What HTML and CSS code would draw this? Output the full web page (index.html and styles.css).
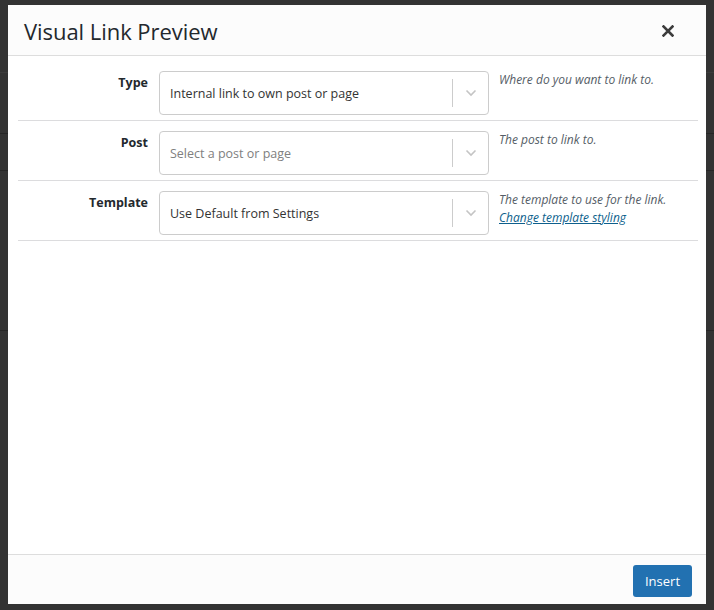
FILE: index.html
```html
<!DOCTYPE html>
<html lang="en">
<head>
<meta charset="utf-8">
<title>Visual Link Preview</title>
<link rel="stylesheet" href="styles.css">
</head>
<body>
<div class="modal">
  <header class="modal-header">
    <h1 class="modal-title">Visual Link Preview</h1>
    <button class="close" aria-label="Close">
      <svg width="12" height="12" viewBox="0 0 12 12"><path d="M1.5 1.5 L10.5 10.5 M10.5 1.5 L1.5 10.5" stroke="#3c3c3c" stroke-width="2.6" stroke-linecap="square"/></svg>
    </button>
  </header>
  <main class="modal-body">
    <div class="field-row">
      <div class="label">Type</div>
      <div class="select">
        <span class="value">Internal link to own post or page</span>
        <span class="indicator"><svg width="12" height="8" viewBox="0 0 12 8"><path d="M1.5 1.5 L6 6 L10.5 1.5" fill="none" stroke="#c4c4c4" stroke-width="1.6"/></svg></span>
      </div>
      <div class="desc">Where do you want to link to.</div>
    </div>
    <div class="field-row">
      <div class="label">Post</div>
      <div class="select">
        <span class="value placeholder">Select a post or page</span>
        <span class="indicator"><svg width="12" height="8" viewBox="0 0 12 8"><path d="M1.5 1.5 L6 6 L10.5 1.5" fill="none" stroke="#c4c4c4" stroke-width="1.6"/></svg></span>
      </div>
      <div class="desc">The post to link to.</div>
    </div>
    <div class="field-row">
      <div class="label">Template</div>
      <div class="select">
        <span class="value">Use Default from Settings</span>
        <span class="indicator"><svg width="12" height="8" viewBox="0 0 12 8"><path d="M1.5 1.5 L6 6 L10.5 1.5" fill="none" stroke="#c4c4c4" stroke-width="1.6"/></svg></span>
      </div>
      <div class="desc">The template to use for the link.<br><a href="#">Change template styling</a></div>
    </div>
  </main>
  <footer class="modal-footer">
    <button class="btn-primary">Insert</button>
  </footer>
</div>
</body>
</html>
```

FILE: styles.css
```css
* { box-sizing: border-box; }

html, body {
  margin: 0;
  height: 100%;
}

body {
  background-color: #333333;
  background-image:
    linear-gradient(to bottom, transparent 72px, #3c3c3c 72px, #3c3c3c 73px, transparent 73px),
    linear-gradient(to bottom, transparent 133px, #262626 133px, #262626 134px, transparent 134px),
    linear-gradient(to bottom, transparent 170px, #262626 170px, #262626 171px, transparent 171px),
    linear-gradient(to bottom, transparent 330px, #262626 330px, #262626 331px, transparent 331px);
  padding: 5px 8px 6px 8px;
  font-family: "Open Sans", "Noto Sans", sans-serif;
  color: #23282d;
}

.modal {
  width: 698px;
  height: 599px;
  background: #fff;
  display: flex;
  flex-direction: column;
}

.modal-header {
  height: 51px;
  background: #fcfcfc;
  border-bottom: 1px solid #dddddd;
  display: flex;
  align-items: center;
  justify-content: space-between;
  padding: 0 32px 0 16px;
}

.modal-title {
  margin: 0;
  font-size: 22px;
  font-weight: 400;
  color: #23282d;
  letter-spacing: -0.05px;
  padding-top: 1px;
}

.close {
  border: 0;
  background: none;
  padding: 0;
  width: 12px;
  height: 12px;
  display: flex;
  margin-top: 1px;
}

.modal-body {
  flex: 1;
  padding: 5px 8px 0 10px;
}

.field-row {
  display: grid;
  grid-template-columns: 130px 330px 1fr;
  column-gap: 11px;
  align-items: start;
  height: 60px;
  padding-top: 10px;
  border-bottom: 1px solid #dcdcde;
}

.label {
  text-align: right;
  font-weight: 700;
  font-size: 12.5px;
  line-height: 18px;
  padding-top: 3px;
  color: #23282d;
}

.select {
  height: 44px;
  border: 1px solid #cccccc;
  border-radius: 4px;
  display: flex;
  align-items: center;
  background: #fff;
}

.value {
  flex: 1;
  padding-left: 10px;
  font-size: 12.5px;
  color: #333333;
  white-space: nowrap;
}

.value.placeholder {
  color: #808080;
}

.indicator {
  width: 36px;
  height: 28px;
  border-left: 1px solid #cccccc;
  display: flex;
  align-items: center;
  justify-content: center;
}

.desc {
  font-style: italic;
  font-size: 12px;
  line-height: 18px;
  color: #555d66;
  padding-top: 0;
  margin-left: -1px;
}

.desc a {
  color: #0e5f8c;
  text-decoration: underline;
}

.modal-footer {
  height: 50px;
  background: #fcfcfc;
  border-top: 1px solid #dddddd;
  display: flex;
  justify-content: flex-end;
  align-items: flex-start;
  padding: 10px 14px 0 0;
}

.btn-primary {
  width: 59px;
  height: 32px;
  border: 0;
  border-radius: 3px;
  background: #2271b1;
  color: #fff;
  font-family: "Open Sans", "Noto Sans", sans-serif;
  font-size: 13px;
  padding: 0;
}
```
